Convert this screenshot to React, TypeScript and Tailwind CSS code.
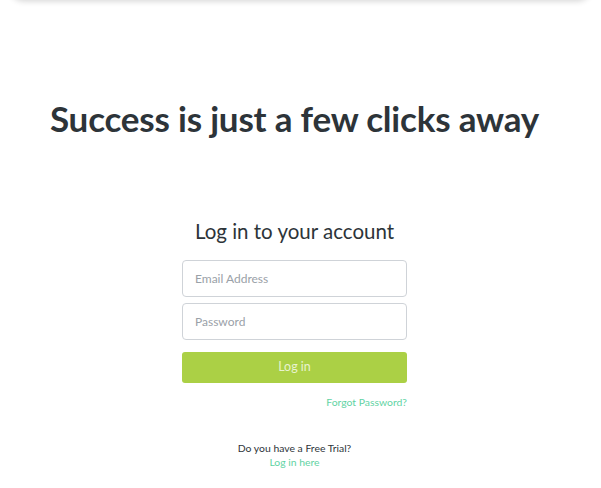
export default function App() {
  return (
    <div className="min-h-[488px] bg-white font-['Lato','Noto_Sans',sans-serif] text-[#2d3439]">
      {/* header card sitting just above the fold */}
      <div className="mx-[10px] -mt-[20px] h-[20px] rounded-b-[14px] bg-white shadow-[0_1px_6px_rgba(0,0,0,0.18)]" />

      <div className="pr-[12px]">
        <h1 className="mt-[96px] text-center text-[35px] font-bold leading-[44px] tracking-[-0.2px]">
          Success is just a few clicks away
        </h1>

        <div className="mx-auto mt-[77px] flex w-[225px] flex-col">
          <h2 className="text-center text-[20.5px] leading-[28px] text-[#2d3439]">Log in to your account</h2>

          <input
            type="text"
            placeholder="Email Address"
            className="mt-[15px] h-[37px] rounded-[4px] border border-[#cfd3d8] px-[12px] text-[12px] placeholder:text-[#9aa1a8] outline-none"
          />
          <input
            type="password"
            placeholder="Password"
            className="mt-[6px] h-[37px] rounded-[4px] border border-[#cfd3d8] px-[12px] text-[12px] placeholder:text-[#9aa1a8] outline-none"
          />

          <button className="mt-[12px] h-[31px] rounded-[3px] bg-[#abd045] text-[12.5px] text-[#e8f3cf]">
            Log in
          </button>

          <a className="mt-[12px] self-end text-[10.4px] leading-[14px] text-[#5fd3a3]">Forgot Password?</a>
        </div>

        <div className="mt-[32px] flex flex-col items-center text-[10.4px] leading-[14px]">
          <span className="text-[#2d3439]">Do you have a Free Trial?</span>
          <a className="text-[#5fd3a3]">Log in here</a>
        </div>
      </div>
    </div>
  );
}
